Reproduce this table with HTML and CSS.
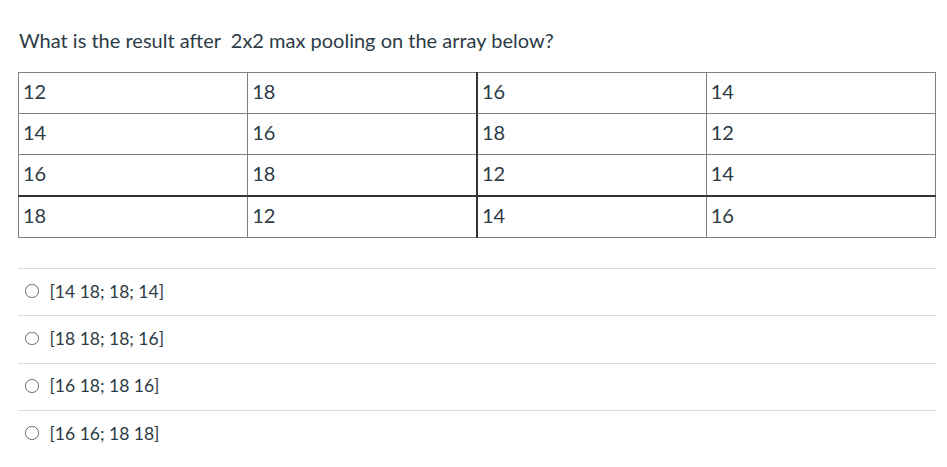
FILE: index.html
```html
<!DOCTYPE html>
<html lang="en">
<head>
<meta charset="utf-8">
<title>Quiz question</title>
<link rel="stylesheet" href="styles.css">
</head>
<body>
<div class="question">
  <p class="prompt">What is the result after&nbsp; 2x2 max pooling on the array below?</p>
  <table class="grid">
    <tbody>
      <tr><td>12</td><td>18</td><td class="split">16</td><td>14</td></tr>
      <tr><td>14</td><td>16</td><td class="split">18</td><td>12</td></tr>
      <tr><td>16</td><td>18</td><td class="split">12</td><td>14</td></tr>
      <tr class="split-row"><td>18</td><td>12</td><td class="split">14</td><td>16</td></tr>
    </tbody>
  </table>
  <div class="answers">
    <label class="answer"><span class="radio"></span><span class="answer-text">[14 18; 18; 14]</span></label>
    <label class="answer"><span class="radio"></span><span class="answer-text">[18 18; 18; 16]</span></label>
    <label class="answer"><span class="radio"></span><span class="answer-text">[16 18; 18 16]</span></label>
    <label class="answer"><span class="radio"></span><span class="answer-text">[16 16; 18 18]</span></label>
  </div>
</div>
</body>
</html>
```
FILE: styles.css
```css
html, body {
  margin: 0;
  padding: 0;
  background: #ffffff;
}

body {
  font-family: Lato, "Noto Sans", sans-serif;
  color: #2d3b45;
}

.question {
  padding: 28px 11px 0 18px;
}

.prompt {
  margin: 0 0 20px 1px;
  font-size: 20px;
  line-height: 24px;
}

.grid {
  width: 918px;
  border-collapse: collapse;
  table-layout: fixed;
  font-size: 20px;
}

.grid td {
  border: 1px solid #808080;
  padding: 6px 4px 10px;
  line-height: 24px;
  vertical-align: middle;
}

.grid td.split {
  border-left: 2px solid #333333;
}

.grid tr.split-row td {
  border-top: 2px solid #333333;
}

.answers {
  margin-top: 30px;
}

.answer {
  display: flex;
  align-items: center;
  height: 44.33px;
  padding-bottom: 2px;
  border-top: 1px solid #dcdcdc;
  padding-left: 7px;
  font-size: 17.5px;
}

.radio {
  width: 11.5px;
  height: 11.5px;
  border: 1.25px solid #6a6a6a;
  border-radius: 50%;
  box-sizing: content-box;
  flex: none;
}

.answer-text {
  margin-left: 11px;
}
```
